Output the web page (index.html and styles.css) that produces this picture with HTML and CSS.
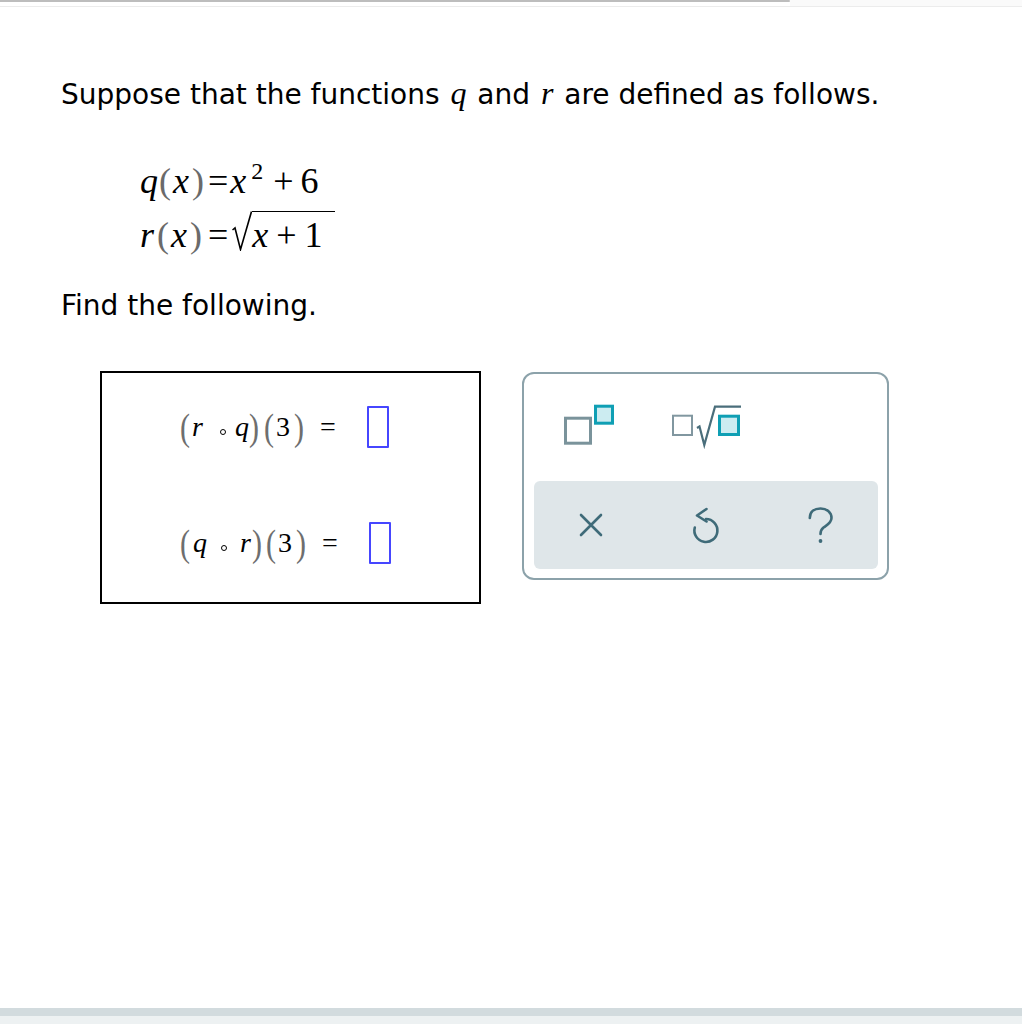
FILE: index.html
```html
<!DOCTYPE html>
<html lang="en">
<head>
<meta charset="utf-8">
<title>Composition of functions</title>
<link rel="stylesheet" href="styles.css">
</head>
<body>
<div class="topbar">
  <div class="progress"><div class="progress-fill"></div></div>
  <div class="progress-rest"></div>
</div>
<main class="content">
  <p class="prompt">Suppose that the functions <i class="mv">q</i> and <i class="mv">r</i> are defined as follows.</p>
  <div class="defs">
    <div class="def-row"><i>q</i><span class="par q-open">(</span><i class="arg">x</i><span class="par close">)</span><span class="eqs q-eq">=</span><i>x</i><span class="sup">2</span><span class="plus q-plus">+</span>6</div>
    <div class="def-row"><i>r</i><span class="par r-open">(</span><i class="arg">x</i><span class="par close">)</span><span class="eqs r-eq">=</span><svg class="radical" width="20" height="42" viewBox="0 0 20 42"><path d="M0.5 21 L3 19 L8.5 40.5 L19.5 2.5" fill="none" stroke="#000" stroke-width="1.6"/></svg><span class="radicand"><i>x</i><span class="plus r-plus">+</span>1</span></div>
  </div>
  <p class="prompt find">Find the following.</p>
  <div class="work">
    <div class="answers">
      <div class="eq">
        <span class="bp">(</span><i class="v a1-r">r</i><span class="ring a1-ring"></span><i class="v">q</i><span class="bp">)</span><span class="bp arg-open">(</span><span class="num">3</span><span class="bp arg-close">)</span><span class="eqsign">=</span><span class="blank"></span>
      </div>
      <div class="eq">
        <span class="bp">(</span><i class="v a2-q">q</i><span class="ring a2-ring"></span><i class="v a2-r">r</i><span class="bp">)</span><span class="bp arg-open2">(</span><span class="num">3</span><span class="bp arg-close">)</span><span class="eqsign">=</span><span class="blank"></span>
      </div>
    </div>
    <div class="keypad">
      <div class="keyrow">
        <svg class="key" width="60" height="50" viewBox="0 0 60 50">
          <rect x="5.5" y="18.2" width="25" height="25" fill="#fff" stroke="#7a939b" stroke-width="3"/>
          <rect x="35.5" y="6.2" width="17" height="17" fill="#ccecf1" stroke="#0f9fb4" stroke-width="3"/>
        </svg>
        <svg class="key" width="85" height="50" viewBox="0 0 85 50">
          <rect x="8" y="15.7" width="19" height="19.3" fill="#fff" stroke="#8197a0" stroke-width="2"/>
          <path d="M32 28 L34.5 26.5 L39.3 45 L50 6.7 L76 6.7" fill="none" stroke="#4a6e7b" stroke-width="2.2"/>
          <rect x="54.5" y="16.2" width="19" height="18.3" fill="#ccecf1" stroke="#0f9fb4" stroke-width="3"/>
        </svg>
      </div>
      <div class="tools">
        <div class="tool">
          <svg width="24" height="24" viewBox="0 0 24 24"><path d="M2 2 L22 22 M22 2 L2 22" stroke="#3f6b79" stroke-width="2.6" stroke-linecap="round" fill="none"/></svg>
        </div>
        <div class="tool">
          <svg width="32" height="40" viewBox="0 0 32 40"><path d="M16.5 4 L7 10.5 L16.5 16.5" fill="none" stroke="#3f6b79" stroke-width="2.6" stroke-linecap="round" stroke-linejoin="round"/><path d="M16 14 A11.5 11.5 0 1 1 4.8 22.5" fill="none" stroke="#3f6b79" stroke-width="2.6" stroke-linecap="round"/></svg>
        </div>
        <div class="tool">
          <svg width="26" height="37" viewBox="0 0 26 37"><path d="M1.8 11 C1.8 4.5 6.5 1.5 12.5 1.5 C18.5 1.5 23.5 5 23.5 11 C23.5 16 19 18 15.5 20.5 C13 22.5 12.5 24 12.5 27" fill="none" stroke="#3f6b79" stroke-width="2.6" stroke-linecap="round"/><circle cx="12.5" cy="34" r="1.9" fill="#3f6b79"/></svg>
        </div>
      </div>
    </div>
  </div>
</main>
<footer class="bottom"><div class="band1"></div><div class="band2"></div></footer>
</body>
</html>
```

FILE: styles.css
```css
html, body {
  margin: 0;
  padding: 0;
}
body {
  font-family: "DejaVu Sans", Verdana, sans-serif;
  color: #000;
  background: #fff;
  min-height: 100vh;
  display: flex;
  flex-direction: column;
}
.topbar {
  display: flex;
  height: 6px;
  border-bottom: 1px solid #ececec;
}
.progress {
  width: 790px;
  background: #fff;
}
.progress-fill {
  height: 2px;
  background: #bdbdbd;
  border-radius: 0 2px 2px 0;
}
.progress-rest {
  flex: 1;
  background: #fafafa;
}
.content {
  padding-left: 61px;
}
.prompt {
  margin: 69px 0 0;
  font-size: 28px;
  line-height: 34px;
}
.mv {
  font-family: "Liberation Serif", serif;
  font-size: 32px;
  margin: 0 2px;
}
.defs {
  margin: 42px 0 0 79px;
  font-family: "Liberation Serif", serif;
  font-size: 36px;
}
.def-row {
  height: 54px;
  line-height: 54px;
  white-space: nowrap;
}
.def-row i {
  font-style: italic;
}
.par {
  color: #6a6a6a;
}
.q-open {
  margin-left: 1px;
}
.r-open {
  margin-left: 3px;
}
.arg {
  margin-left: 2px;
}
.close {
  margin-left: 3px;
}
.q-eq {
  margin: 0 2px 0 4px;
}
.r-eq {
  margin: 0 4px 0 6px;
}
.sup {
  font-size: 24px;
  vertical-align: 14px;
  line-height: 0;
  margin-left: 5px;
}
.q-plus {
  margin: 0 7px 0 10px;
}
.r-plus {
  margin: 0 8px 0 8px;
}
.radical {
  display: inline-block;
  vertical-align: -4px;
}
.radicand {
  display: inline-block;
  line-height: 36px;
  padding-top: 5px;
  padding-right: 12px;
  border-top: 1.6px solid #000;
}
.find {
  margin-top: 27px;
}
.work {
  display: flex;
  align-items: flex-start;
  gap: 41px;
  margin: 48px 0 0 39px;
}
.answers {
  box-sizing: border-box;
  width: 381px;
  height: 233px;
  border: 2px solid #000;
  padding: 33px 0 0 78px;
  display: flex;
  flex-direction: column;
  gap: 74px;
}
.eq {
  display: flex;
  align-items: center;
  height: 42px;
  font-family: "Liberation Serif", serif;
  font-size: 28px;
  white-space: nowrap;
}
.bp {
  display: inline-block;
  font-size: 30px;
  line-height: 1;
  color: #6e6e6e;
  transform: scaleY(1.25);
}
.v {
  font-style: italic;
}
.a1-r {
  margin-left: 2px;
}
.a2-q {
  margin-left: 3px;
}
.a2-r {
  margin-right: 1px;
}
.ring {
  width: 4px;
  height: 4px;
  border: 1px solid #000;
  border-radius: 50%;
  margin-top: 9px;
}
.a1-ring {
  margin-left: 17px;
  margin-right: 9px;
}
.a2-ring {
  margin-left: 14px;
  margin-right: 13px;
}
.arg-open {
  margin-left: 5px;
}
.arg-open2 {
  margin-left: 4px;
}
.num {
  margin-left: 2px;
}
.arg-close {
  margin-left: 4px;
}
.eqsign {
  margin: 0 31px 0 16px;
}
.blank {
  box-sizing: border-box;
  width: 22px;
  height: 42px;
  border: 2px solid #4646ff;
  border-radius: 1px;
}
.keypad {
  box-sizing: border-box;
  width: 367px;
  margin-top: 1px;
  border: 2px solid #8ca2aa;
  border-radius: 12px;
  padding: 26px 9px 9px 10px;
}
.keyrow {
  display: flex;
  height: 50px;
  padding-left: 26px;
  gap: 45px;
}
.key {
  display: block;
}
.tools {
  margin-top: 31px;
  height: 88px;
  background: #dfe6e9;
  border-radius: 6px;
  display: flex;
}
.tool {
  flex: 1;
  display: flex;
  align-items: center;
  justify-content: center;
}
.tool svg {
  display: block;
}
.bottom {
  margin-top: auto;
}
.band1 {
  height: 8px;
  background: #d2dbde;
}
.band2 {
  height: 8px;
  background: #edf1f2;
}
```
